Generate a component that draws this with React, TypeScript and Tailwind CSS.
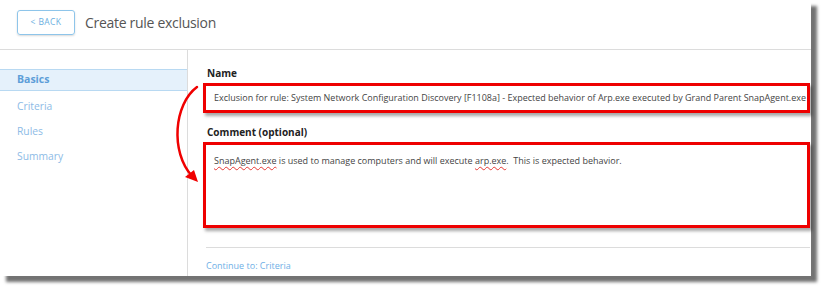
import React from "react";

const font = { fontFamily: '"Open Sans", "Noto Sans", sans-serif' };

const steps = ["Basics", "Criteria", "Rules", "Summary"];

function CurvedArrow() {
  return (
    <svg
      className="absolute left-[170px] top-[82px] pointer-events-none"
      width="40"
      height="104"
      viewBox="0 0 40 104"
    >
      <path
        d="M27 5 C 4 22, 0 70, 22 94"
        fill="none"
        stroke="#f00000"
        strokeWidth="2.5"
        strokeLinecap="round"
      />
      <path d="M28 100 L 15 95 L 24 88 Z" fill="#f00000" />
    </svg>
  );
}

export default function App() {
  return (
    <div className="w-[826px] h-[292px] bg-white text-[#333]" style={font}>
      <div className="relative w-[811px] h-[276px] bg-white flex flex-col shadow-[6px_6px_3px_rgba(0,0,0,0.55)]">
        <div className="h-[50px] flex items-start pt-[10px] pl-[17px] border-b border-[#dcdcdc]">
          <button className="w-[58px] h-[25px] rounded-[3px] border border-[#8ec5ea] text-[8.5px] tracking-[0.4px] text-[#6aaee0] shadow-[0_1px_2px_rgba(0,0,0,0.15)]">
            &lt; BACK
          </button>
          <h1 className="ml-[10px] text-[14px] tracking-[-0.3px] leading-[25px] text-[#555]">Create rule exclusion</h1>
        </div>

        <div className="flex flex-1">
          <div className="w-[188px] shrink-0 border-r border-[#dcdcdc] pt-[19px]">
            {steps.map((s, i) => (
              <div
                key={s}
                className={
                  i === 0
                    ? "h-[22px] flex items-center pl-[17px] bg-[#e5f1fb] border-y border-[#b8d9f2] text-[10.5px] font-bold text-[#5d9ed8]"
                    : "h-[25px] flex items-center pl-[17px] text-[10.3px] text-[#8dbbe6]"
                }
                style={i === 1 ? { marginTop: 3 } : undefined}
              >
                {s}
              </div>
            ))}
          </div>

          <div className="flex-1 min-w-0 flex flex-col pl-[15px] pr-[1px] pt-[16px]">
            <div className="pl-[4px] text-[10px] leading-[14px] font-bold text-[#222]">Name</div>
            <div className="mt-[3px] h-[30px] border-[3px] border-[#ee0000] shadow-[2px_3px_3px_rgba(0,0,0,0.35)] flex items-center pl-[8px] text-[8.97px] text-[#444] whitespace-nowrap overflow-hidden">
              Exclusion for rule: System Network Configuration Discovery [F1108a] - Expected behavior of Arp.exe executed by Grand Parent SnapAgent.exe
            </div>

            <div className="mt-[12px] pl-[4px] text-[10px] leading-[14px] font-bold text-[#222]">Comment (optional)</div>
            <div className="mt-[3px] h-[86px] border-[3px] border-[#ee0000] shadow-[2px_3px_3px_rgba(0,0,0,0.35)] pl-[8px] pt-[9px] text-[9px] text-[#444] whitespace-nowrap">
              <span className="underline decoration-wavy decoration-[#e53935] decoration-1 underline-offset-2">SnapAgent.exe</span>
              {" is used to manage computers and will execute "}
              <span className="underline decoration-wavy decoration-[#e53935] decoration-1 underline-offset-2">arp.exe</span>
              {".\u00a0 This is expected behavior."}
            </div>

            <div className="mt-[19px] ml-[3px] border-t border-[#dcdcdc]" />
            <div className="ml-[3px] mt-[11px] text-[9px] text-[#6fafe6]">Continue to: Criteria</div>
          </div>
        </div>

        <CurvedArrow />
      </div>
    </div>
  );
}
